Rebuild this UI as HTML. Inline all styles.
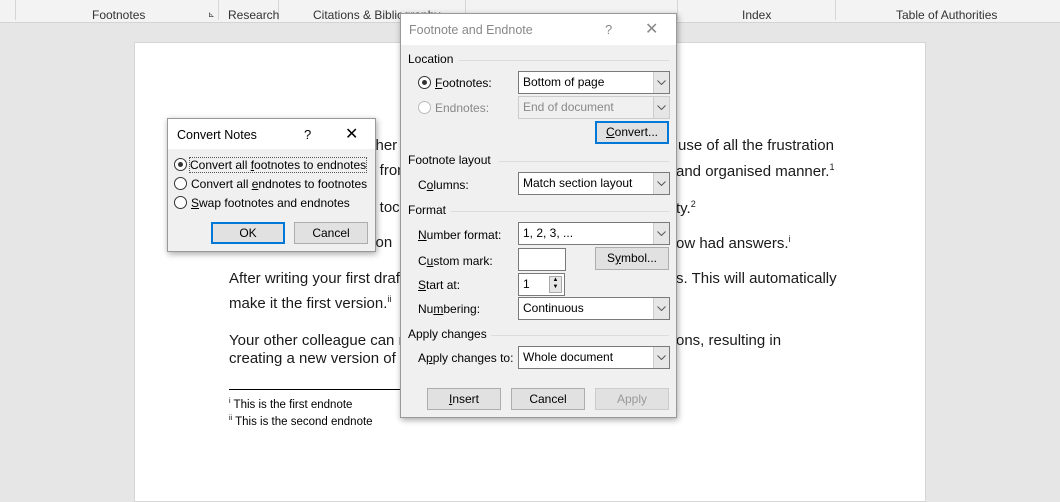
<!DOCTYPE html>
<html><head><style>
*{margin:0;padding:0;box-sizing:border-box}
body{width:1060px;height:496px;overflow:hidden;background:#e6e6e6;position:relative;font-family:"Liberation Sans",sans-serif}
.a{position:absolute;white-space:nowrap}
.rib{position:absolute;left:0;top:0;width:1060px;height:23px;background:#f3f3f3;border-bottom:1px solid #d4d4d4}
.rl{position:absolute;top:8px;font-size:12px;color:#333}
.sep{position:absolute;top:0;width:1px;height:20px;background:#d6d6d6}
.page{position:absolute;left:134px;top:42px;width:792px;height:460px;background:#fff;border:1px solid #d6d6d6}
.t{position:absolute;font-size:15px;color:#1a1a1a;white-space:nowrap}
sup{font-size:9px}
.dlg{position:absolute;background:#f0f0f0;border:1px solid #999;box-shadow:1px 2px 6px rgba(0,0,0,.35);font-size:12px;color:#000}
.tb{position:absolute;left:0;top:0;right:0;background:#fff}
.btn{position:absolute;background:#e1e1e1;border:1px solid #adadad;text-align:center;font-size:12px;line-height:20px}
.sel{position:absolute;background:#fff;border:1px solid #7a7a7a;height:23px;font-size:12px;line-height:21px;padding-left:4px}
.sel .ar{position:absolute;right:0;top:0;width:16px;height:21px;background:#e6e6e6;border-left:1px solid #ccc}
.sel .ar svg{position:absolute;left:3px;top:8px}
.rad{position:absolute;width:13px;height:13px;border:1px solid #333;border-radius:50%;background:#fff}
.grp{position:absolute;font-size:12px}
.hl{position:absolute;height:1px;background:#dcdcdc}
u{text-decoration:underline}
</style></head><body>
<div class="rib">
<div class="sep" style="left:15px"></div>
<div class="sep" style="left:218px"></div>
<div class="sep" style="left:278px"></div>
<div class="sep" style="left:465px"></div>
<div class="sep" style="left:677px"></div>
<div class="sep" style="left:835px"></div>
<div class="rl" style="left:92px">Footnotes</div>
<div class="rl" style="left:208px;font-size:8px;top:10px">⊾</div>
<div class="rl" style="left:228px">Research</div>
<div class="rl" style="left:313px">Citations &amp; Bibliography</div>
<div class="rl" style="left:742px">Index</div>
<div class="rl" style="left:896px">Table of Authorities</div>
</div>
<div class="page"></div>
<div class="t" style="left:368px;top:137px">ither</div>
<div class="t" style="left:678px;top:137px">use of all the frustration</div>
<div class="t" style="left:368px;top:162px">s fron</div>
<div class="t" style="left:676px;top:162px">and organised manner.<sup>1</sup></div>
<div class="t" style="left:368px;top:199px">y toc</div>
<div class="t" style="left:676px;top:199px">ty.<sup>2</sup></div>
<div class="t" style="left:368px;top:234px">tion</div>
<div class="t" style="left:676px;top:234px">ow had answers.<sup>i</sup></div>
<div class="t" style="left:229px;top:270px">After writing your first draft</div>
<div class="t" style="left:676px;top:270px">s. This will automatically</div>
<div class="t" style="left:229px;top:294px">make it the first version.<sup>ii</sup></div>
<div class="t" style="left:229px;top:332px">Your other colleague can r</div>
<div class="t" style="left:676px;top:332px">ons, resulting in</div>
<div class="t" style="left:229px;top:350px">creating a new version of t</div>
<div class="a" style="left:229px;top:389px;width:175px;height:1px;background:#000"></div>
<div class="a" style="left:229px;top:398px;font-size:11.5px"><sup style="font-size:7px">i</sup> This is the first endnote</div>
<div class="a" style="left:229px;top:415px;font-size:11.5px"><sup style="font-size:7px">ii</sup> This is the second endnote</div>

<div class="dlg" style="left:167px;top:118px;width:209px;height:134px">
<div class="tb" style="height:30px"></div>
<div class="a" style="left:9px;top:9px;font-size:12.5px">Convert Notes</div>
<div class="a" style="left:136px;top:8px;font-size:13px">?</div>
<div class="a" style="left:177px;top:5px;font-size:16px">✕</div>
<div class="rad" style="left:6px;top:39px"><div style="position:absolute;left:3px;top:3px;width:5px;height:5px;border-radius:50%;background:#333"></div></div>
<div class="a" style="left:22px;top:39px;outline:1px dotted #555">Convert all <u>f</u>ootnotes to endnotes</div>
<div class="rad" style="left:6px;top:58px"></div>
<div class="a" style="left:23px;top:58px">Convert all <u>e</u>ndnotes to footnotes</div>
<div class="rad" style="left:6px;top:77px"></div>
<div class="a" style="left:23px;top:77px"><u>S</u>wap footnotes and endnotes</div>
<div class="btn" style="left:43px;top:103px;width:74px;height:22px;border:2px solid #0078d7;line-height:18px">OK</div>
<div class="btn" style="left:126px;top:103px;width:74px;height:22px">Cancel</div>
</div>

<div class="dlg" style="left:400px;top:13px;width:277px;height:405px">
<div class="tb" style="height:31px"></div>
<div class="a" style="left:8px;top:9px;color:#888;font-size:12.5px">Footnote and Endnote</div>
<div class="a" style="left:204px;top:8px;color:#888;font-size:13px">?</div>
<div class="a" style="left:244px;top:5px;color:#888;font-size:16px">✕</div>
<div class="grp" style="left:7px;top:38px">Location</div><div class="hl" style="left:58px;right:7px;top:46px"></div>
<div class="rad" style="left:17px;top:62px"><div style="position:absolute;left:3px;top:3px;width:5px;height:5px;border-radius:50%;background:#333"></div></div>
<div class="a" style="left:34px;top:62px"><u>F</u>ootnotes:</div>
<div class="sel" style="left:117px;top:57px;width:152px">Bottom of page<div class="ar"><svg width="9" height="5"><path d="M0.5 0.5L4.5 4.5L8.5 0.5" fill="none" stroke="#555"/></svg></div></div>
<div class="rad" style="left:17px;top:87px;border-color:#bbb"></div>
<div class="a" style="left:34px;top:87px;color:#888">Endnotes:</div>
<div class="sel" style="left:117px;top:82px;width:152px;color:#888;background:#f0f0f0;border-color:#ccc">End of document<div class="ar"><svg width="9" height="5"><path d="M0.5 0.5L4.5 4.5L8.5 0.5" fill="none" stroke="#555"/></svg></div></div>
<div class="btn" style="left:194px;top:107px;width:74px;height:23px;border:2px solid #0078d7;line-height:19px"><u>C</u>onvert...</div>
<div class="grp" style="left:7px;top:139px">Footnote layout</div><div class="hl" style="left:98px;right:7px;top:147px"></div>
<div class="a" style="left:17px;top:164px">C<u>o</u>lumns:</div>
<div class="sel" style="left:117px;top:158px;width:152px">Match section layout<div class="ar"><svg width="9" height="5"><path d="M0.5 0.5L4.5 4.5L8.5 0.5" fill="none" stroke="#555"/></svg></div></div>
<div class="grp" style="left:7px;top:189px">Format</div><div class="hl" style="left:50px;right:7px;top:197px"></div>
<div class="a" style="left:17px;top:214px"><u>N</u>umber format:</div>
<div class="sel" style="left:117px;top:208px;width:152px">1, 2, 3, ...<div class="ar"><svg width="9" height="5"><path d="M0.5 0.5L4.5 4.5L8.5 0.5" fill="none" stroke="#555"/></svg></div></div>
<div class="a" style="left:17px;top:240px">C<u>u</u>stom mark:</div>
<div class="sel" style="left:117px;top:234px;width:48px"></div>
<div class="btn" style="left:194px;top:233px;width:74px;height:23px">S<u>y</u>mbol...</div>
<div class="a" style="left:17px;top:264px"><u>S</u>tart at:</div>
<div class="sel" style="left:117px;top:259px;width:47px">1<div style="position:absolute;right:2px;top:2px;width:13px;height:17px;border:1px solid #aaa;background:#e6e6e6;font-size:6px;line-height:7px;text-align:center">▲<br>▼</div></div>
<div class="a" style="left:17px;top:288px">Nu<u>m</u>bering:</div>
<div class="sel" style="left:117px;top:283px;width:152px">Continuous<div class="ar"><svg width="9" height="5"><path d="M0.5 0.5L4.5 4.5L8.5 0.5" fill="none" stroke="#555"/></svg></div></div>
<div class="grp" style="left:7px;top:313px">Apply changes</div><div class="hl" style="left:90px;right:7px;top:321px"></div>
<div class="a" style="left:17px;top:337px">A<u>p</u>ply changes to:</div>
<div class="sel" style="left:117px;top:332px;width:152px">Whole document<div class="ar"><svg width="9" height="5"><path d="M0.5 0.5L4.5 4.5L8.5 0.5" fill="none" stroke="#555"/></svg></div></div>
<div class="btn" style="left:26px;top:374px;width:74px;height:22px"><u>I</u>nsert</div>
<div class="btn" style="left:110px;top:374px;width:74px;height:22px">Cancel</div>
<div class="btn" style="left:194px;top:374px;width:74px;height:22px;color:#999;border-color:#ccc">Apply</div>
</div>
</body></html>
